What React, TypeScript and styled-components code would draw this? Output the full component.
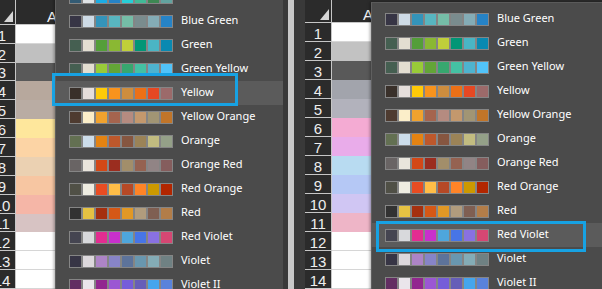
import React from "react";
import styled, { createGlobalStyle } from "styled-components";

const GlobalStyle = createGlobalStyle`
  html, body {
    margin: 0;
    padding: 0;
    background: #c8c8c8;
  }
  body {
    font-family: "Noto Sans", "Liberation Sans", sans-serif;
  }
`;

type Theme = { name: string; colors: string[] };

const THEMES: Theme[] = [
  { name: "Blue II", colors: ["#335B74", "#DFE3E5", "#1CADE4", "#2683C6", "#27CED7", "#42BA97", "#3E8853", "#62A39F"] },
  { name: "Blue Green", colors: ["#373545", "#CEDBE6", "#3494BA", "#58B6C0", "#75BDA7", "#7A8C8E", "#84ACB6", "#2683C6"] },
  { name: "Green", colors: ["#455F51", "#E3DED1", "#549E39", "#8AB833", "#C0CF3A", "#029676", "#4AB5C4", "#0989B1"] },
  { name: "Green Yellow", colors: ["#455F51", "#E3DED1", "#99CB38", "#63A537", "#37A76F", "#44C1A3", "#4EB3CF", "#51C3F9"] },
  { name: "Yellow", colors: ["#39302A", "#E5DEDB", "#FFCA08", "#F8931D", "#CE8D3E", "#EC7016", "#E64823", "#9C6A6A"] },
  { name: "Yellow Orange", colors: ["#4E3B30", "#FBEEC9", "#F0A22E", "#A5644E", "#B58B80", "#C3986D", "#A19574", "#C17529"] },
  { name: "Orange", colors: ["#637052", "#CCDDEA", "#E48312", "#BD582C", "#865640", "#9B8357", "#C2BC80", "#94A088"] },
  { name: "Orange Red", colors: ["#696464", "#E9E5DC", "#D34817", "#9B2D1F", "#A28E6A", "#956251", "#918485", "#855D5D"] },
  { name: "Red Orange", colors: ["#505046", "#EEECE1", "#E84C22", "#FFBD47", "#B64926", "#FF8427", "#CC9900", "#B22600"] },
  { name: "Red", colors: ["#323232", "#E5C243", "#A5300F", "#D55816", "#E19825", "#B19C7D", "#7F5F52", "#B27D49"] },
  { name: "Red Violet", colors: ["#454551", "#D8D9DC", "#E32D91", "#C830CC", "#4EA6DC", "#4775E7", "#8971E1", "#D54773"] },
  { name: "Violet", colors: ["#373545", "#DCD8DC", "#AD84C6", "#8784C7", "#5D739A", "#6997AF", "#84ACB6", "#6F8183"] },
  { name: "Violet II", colors: ["#632E62", "#EAE5EB", "#92278F", "#9B57D3", "#755DD9", "#665EB8", "#45A5ED", "#5982DB"] },
];

const WHITE = "#ffffff";

const yellowCells = [
  WHITE, "#c0c0c0", "#595959", "#b7a89d", "#b9aca3", "#fee79c",
  "#fcd4a5", "#ebd1b2", "#f7c6a2", "#f5b6a7", "#d7c3c3", WHITE, WHITE, WHITE,
];

const violetCells = [
  WHITE, "#c2c2c2", "#595959", "#a2a4ac", "#b2b2bc", "#f4abd3",
  "#e9acea", "#b8dbf1", "#b5c8f5", "#d0c6f3", "#eeb5c7", WHITE, WHITE, WHITE,
];

const Stage = styled.div`
  display: flex;
  width: 602px;
  height: 289px;
  overflow: hidden;
  background: #c8c8c8;
`;

const Panel = styled.div<{ $width?: number }>`
  position: relative;
  display: flex;
  flex: ${(p) => (p.$width ? `0 0 ${p.$width}px` : "1 1 auto")};
  height: 100%;
  overflow: hidden;
  background: #2b2b2b;
`;

const Divider = styled.div`
  flex: 0 0 6px;
  background: #c8c8c8;
`;

const Bezel = styled.div`
  flex: 0 0 11px;
  background: #393939;
`;

const Sheet = styled.div<{ $offset: number }>`
  display: flex;
  flex-direction: column;
  flex: none;
  margin-left: ${(p) => p.$offset}px;
`;

const HeaderRow = styled.div<{ $h: number }>`
  display: flex;
  height: ${(p) => p.$h}px;
  border-bottom: 1px solid #c6c6c6;
`;

const Corner = styled.div`
  box-sizing: border-box;
  width: 27px;
  display: flex;
  align-items: flex-end;
  justify-content: flex-end;
  padding: 0 2px 2px 0;
  border-right: 1px solid #c6c6c6;
  background: #2b2b2b;
`;

const Triangle = styled.span`
  width: 0;
  height: 0;
  border-left: 9px solid transparent;
  border-bottom: 11px solid #d6d6d6;
`;

const ColHead = styled.div`
  width: 72px;
  display: flex;
  align-items: flex-end;
  justify-content: center;
  color: #f4f4f4;
  font: 15px/14px "Liberation Sans", Arial, sans-serif;
  background: #2b2b2b;
`;

const Row = styled.div`
  display: flex;
  height: 19px;
`;

const RowHead = styled.div`
  box-sizing: border-box;
  width: 27px;
  display: flex;
  align-items: flex-end;
  justify-content: center;
  border-right: 1px solid #c6c6c6;
  border-bottom: 1px solid #c6c6c6;
  background: #2b2b2b;
  color: #eeeeee;
  font: 15px/15px "Liberation Sans", Arial, sans-serif;
`;

const Cell = styled.div<{ $fill: string }>`
  box-sizing: border-box;
  width: 72px;
  background: ${(p) => p.$fill};
  border-bottom: 1px solid ${(p) => (p.$fill === WHITE ? "#d6d6d6" : p.$fill)};
`;

const Menu = styled.ul<{ $left: number; $top: number; $width?: number; $edge?: boolean }>`
  position: absolute;
  left: ${(p) => p.$left}px;
  top: ${(p) => p.$top}px;
  ${(p) => (p.$width ? `width: ${p.$width}px;` : "right: -20px;")}
  margin: 0;
  padding: ${(p) => (p.$edge ? "0" : "4px 0 0")};
  list-style: none;
  background: #4b4b4b;
  border-left: 1px solid #5f5f5f;
  border-top: ${(p) => (p.$edge ? "none" : "1px solid #5a5a5a")};
  border-right: ${(p) => (p.$edge ? "5px solid #393939" : "none")};
  box-shadow: -1px 0 3px rgba(0, 0, 0, 0.35);
`;

const Item = styled.li<{ $active?: boolean }>`
  display: flex;
  align-items: center;
  gap: 8px;
  height: 24px;
  padding-left: 13px;
  background: ${(p) => (p.$active ? "#5b5b5b" : "transparent")};
`;

const Strip = styled.span`
  display: flex;
  flex: none;
`;

const Swatch = styled.span<{ $c: string }>`
  width: 11px;
  height: 11px;
  border: 1px solid #858585;
  background: ${(p) => p.$c};
`;

const Label = styled.span`
  margin-bottom: 3px;
  color: #ffffff;
  font-size: 11px;
  line-height: 1;
  white-space: nowrap;
`;

const Callout = styled.div<{ $x: number; $y: number; $w: number; $h: number }>`
  position: absolute;
  left: ${(p) => p.$x}px;
  top: ${(p) => p.$y}px;
  width: ${(p) => p.$w}px;
  height: ${(p) => p.$h}px;
  box-sizing: border-box;
  border: 3px solid #17a2e3;
  pointer-events: none;
`;

const Grid = ({ cells, offset, head }: { cells: string[]; offset: number; head: number }) => (
  <Sheet $offset={offset}>
    <HeaderRow $h={head}>
      <Corner>
        <Triangle />
      </Corner>
      <ColHead>A</ColHead>
    </HeaderRow>
    {cells.map((c, i) => (
      <Row key={i}>
        <RowHead>{i + 1}</RowHead>
        <Cell $fill={c} />
      </Row>
    ))}
  </Sheet>
);

const ThemeList = ({ themes, active }: { themes: Theme[]; active: string }) => (
  <>
    {themes.map((t) => (
      <Item key={t.name} $active={t.name === active}>
        <Strip>
          {t.colors.map((c, i) => (
            <Swatch key={i} $c={c} />
          ))}
        </Strip>
        <Label>{t.name}</Label>
      </Item>
    ))}
  </>
);

export default function App() {
  return (
    <>
      <GlobalStyle />
      <Stage>
        <Panel $width={288}>
          <Grid cells={yellowCells} offset={-11} head={24} />
          <Menu $left={55} $top={-15} $width={227} $edge>
            <ThemeList themes={THEMES} active="Yellow" />
          </Menu>
          <Callout $x={52} $y={73} $w={186} $h={33} />
        </Panel>
        <Divider />
        <Panel>
          <Bezel />
          <Grid cells={violetCells} offset={0} head={22} />
          <Menu $left={77} $top={2}>
            <ThemeList themes={THEMES.slice(1)} active="Red Violet" />
          </Menu>
          <Callout $x={82} $y={221} $w={210} $h={31} />
        </Panel>
      </Stage>
    </>
  );
}
